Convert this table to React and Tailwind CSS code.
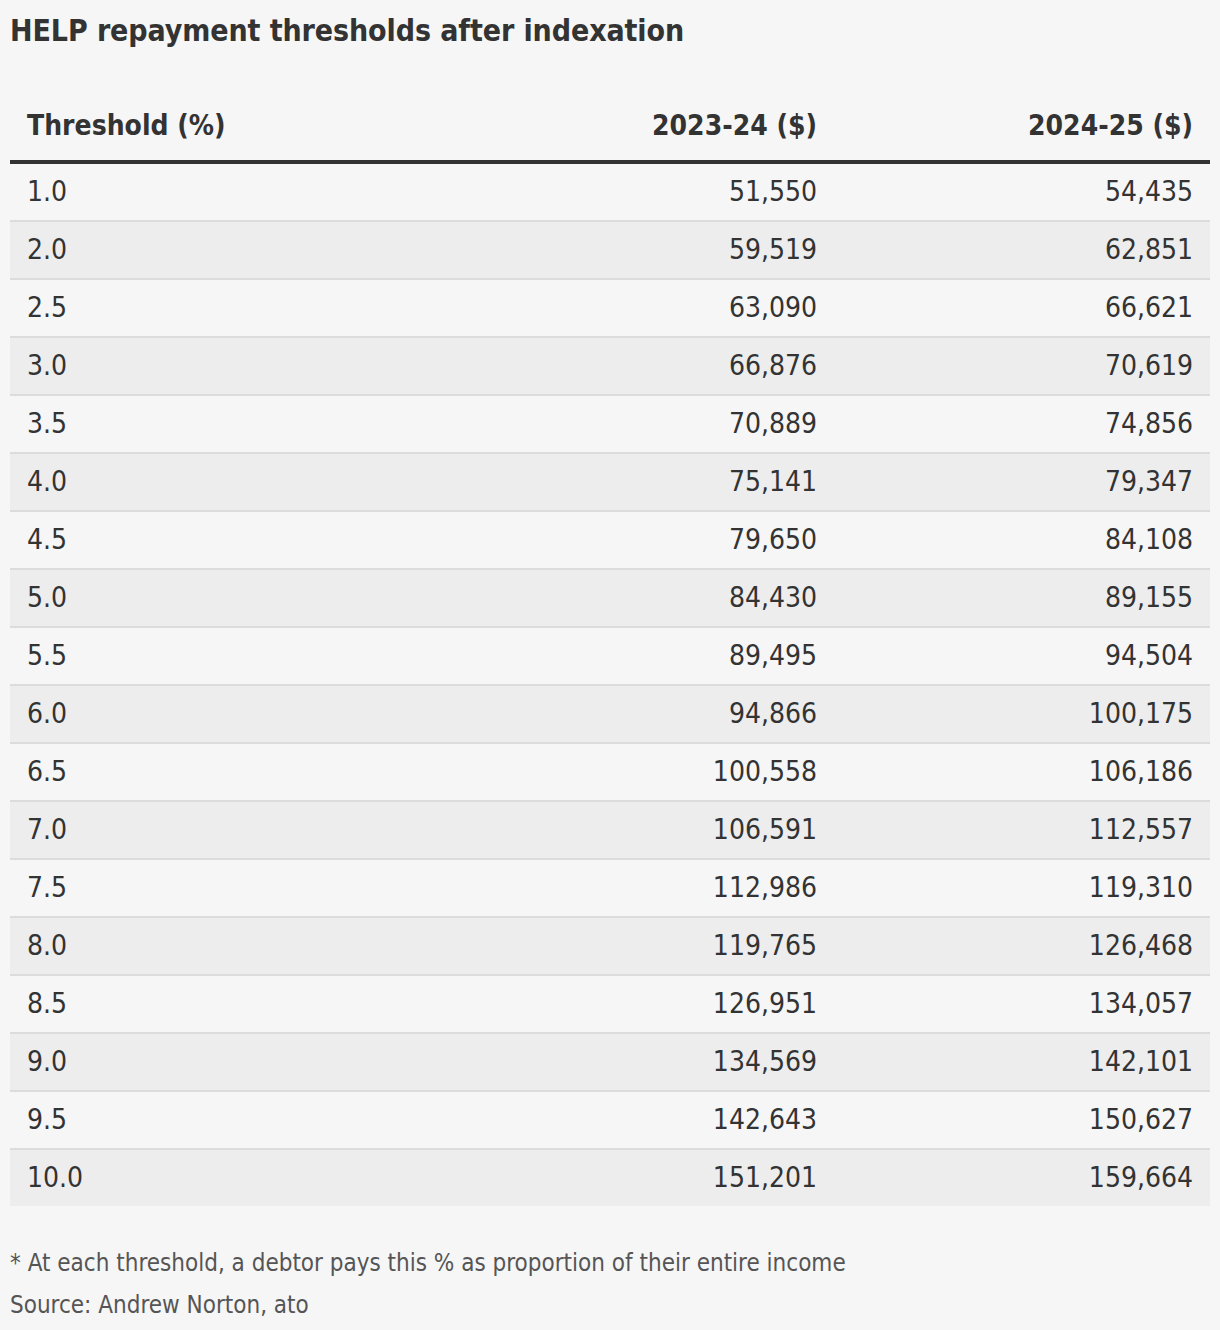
const rows = [
  ["1.0", "51,550", "54,435"],
  ["2.0", "59,519", "62,851"],
  ["2.5", "63,090", "66,621"],
  ["3.0", "66,876", "70,619"],
  ["3.5", "70,889", "74,856"],
  ["4.0", "75,141", "79,347"],
  ["4.5", "79,650", "84,108"],
  ["5.0", "84,430", "89,155"],
  ["5.5", "89,495", "94,504"],
  ["6.0", "94,866", "100,175"],
  ["6.5", "100,558", "106,186"],
  ["7.0", "106,591", "112,557"],
  ["7.5", "112,986", "119,310"],
  ["8.0", "119,765", "126,468"],
  ["8.5", "126,951", "134,057"],
  ["9.0", "134,569", "142,101"],
  ["9.5", "142,643", "150,627"],
  ["10.0", "151,201", "159,664"],
];

export default function App() {
  return (
    <div className="min-h-[1330px] bg-[#f6f6f6] px-[10px] pt-[13px] font-['DejaVu_Sans_Condensed','DejaVu_Sans',sans-serif] text-[#333]">
      <h1 className="text-[30px] font-bold leading-[36px] tracking-[-0.1px] text-[#333]">
        HELP repayment thresholds after indexation
      </h1>

      <div className="mt-[42px]">
        <div className="grid grid-cols-[1fr_376px_376px] border-b-4 border-[#333] pt-[18px] pb-[17px] text-[28px] font-bold leading-[34px]">
          <div className="px-[17px]">Threshold (%)</div>
          <div className="px-[17px] text-right">2023-24 ($)</div>
          <div className="px-[17px] text-right">2024-25 ($)</div>
        </div>
        {rows.map((r, i) => (
          <div
            key={r[0]}
            className={
              "grid grid-cols-[1fr_376px_376px] items-center text-[28px] leading-[34px] " +
              (i === 0 ? "h-[56px] " : "h-[58px] border-t-2 border-[#dcdcdc] ") +
              (i % 2 === 1 ? "bg-[#ededed]" : "bg-[#f6f6f6]")
            }
          >
            <div className="px-[17px]">{r[0]}</div>
            <div className="px-[17px] text-right">{r[1]}</div>
            <div className="px-[17px] text-right">{r[2]}</div>
          </div>
        ))}
      </div>

      <div className="mt-[36px] text-[24px] leading-[42px] text-[#555]">
        <p>* At each threshold, a debtor pays this % as proportion of their entire income</p>
        <p>Source: Andrew Norton, ato</p>
      </div>
    </div>
  );
}
